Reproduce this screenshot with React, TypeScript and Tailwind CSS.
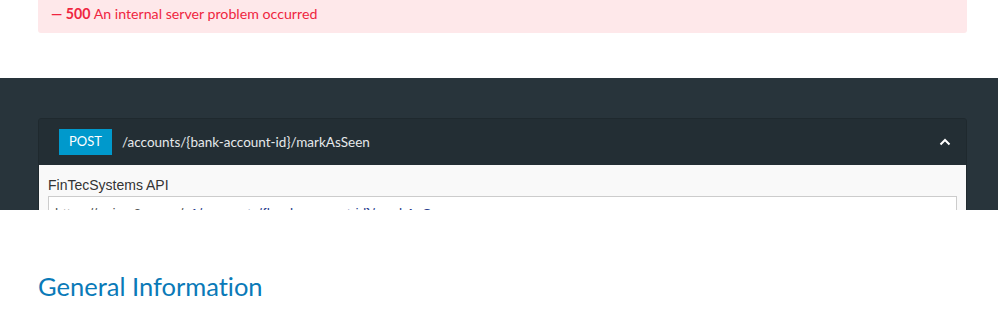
export default function App() {
  const sans = { fontFamily: 'Lato, "Open Sans", sans-serif' }
  return (
    <div className="w-[998px] h-[317px] overflow-hidden bg-white [font-variant-ligatures:none]" style={sans}>
      <div className="px-[38px] pr-[31px]">
        <div className="h-[33px] bg-[#fee8ea] rounded-b-[3px] pl-[13px] pt-[3px] text-[14.2px] text-[#ef2540]">
          <span className="font-bold">— 500</span> An internal server problem occurred
        </div>
      </div>

      <div className="mt-[45px] h-[132px] bg-[#28343b] overflow-hidden pt-[40px] pl-[38px] pr-[31px]">
        <div className="rounded-t-[3px] border border-[#1f292e] overflow-hidden">
          <div className="h-[46px] bg-[#232e34] flex items-center pl-[20px] pr-[15px]">
            <span className="h-[26px] w-[53px] bg-[#0099cc] text-white text-[13px] flex items-center justify-center">
              POST
            </span>
            <span className="ml-[10px] text-[13.5px] text-[#e6e9eb]">/accounts/{'{'}bank-account-id{'}'}/markAsSeen</span>
            <svg className="ml-auto" width="12" height="8" viewBox="0 0 12 8">
              <path d="M1.5 6.5 L6 2 L10.5 6.5" fill="none" stroke="white" strokeWidth="2" />
            </svg>
          </div>
          <div className="bg-[#f9f9f9] px-[9px] pt-[11px] pb-4">
            <div className="text-[14px] text-[#333] leading-[18px]" style={{ fontFamily: '"Liberation Sans", Arial, sans-serif' }}>
              FinTecSystems API
            </div>
            <div className="mt-[2px] bg-white border border-[#ccc] h-[36px] pl-[6px] pt-[9px] text-[14px] leading-[16px]" style={{ fontFamily: '"Liberation Sans", Arial, sans-serif' }}>
              <span className="text-[#555]">https://api.xs2a.com/v</span>
              <span className="text-[#293c8c]">1/accounts/{'{'}bank-account-id{'}'}/markAsSeen</span>
            </div>
          </div>
        </div>
      </div>

      <h2 className="mt-[60px] pl-[38px] text-[25.5px] leading-[32px] text-[#0a7ab8]">General Information</h2>
    </div>
  )
}
